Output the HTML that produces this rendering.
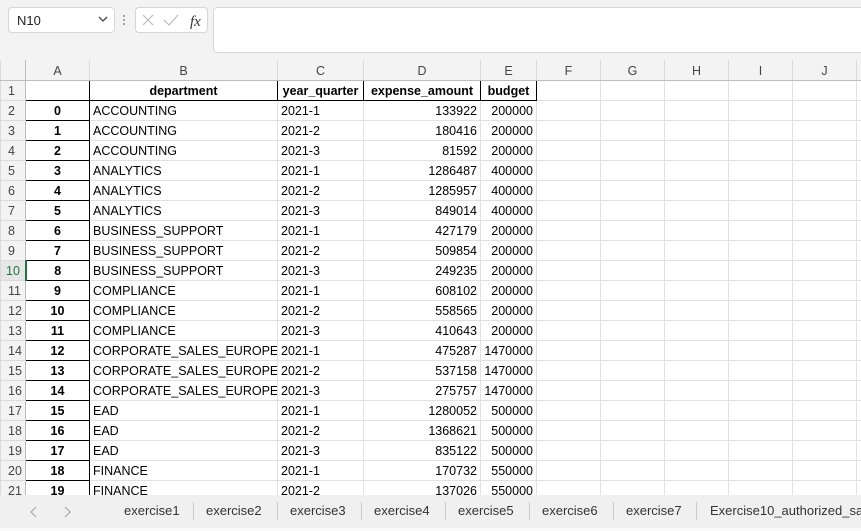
<!DOCTYPE html>
<html><head><style>
*{margin:0;padding:0;box-sizing:border-box}
body{width:861px;height:531px;overflow:hidden;background:#f3f3f3;font-family:"Liberation Sans",Arial,sans-serif;position:relative}
.nb{position:absolute;left:8px;top:7px;width:107px;height:26px;background:#fff;border:1px solid #d6d6d6;border-radius:4px;font-size:13px;color:#222;padding:5px 0 0 8px}
.fx{position:absolute;left:135px;top:7px;width:73px;height:26px;background:#fff;border:1px solid #d6d6d6;border-radius:4px}
.fb{position:absolute;left:213px;top:7px;width:660px;height:46px;background:#fff;border:1px solid #d6d6d6;border-radius:4px}
.grid{position:absolute;left:0;top:60px;width:861px;height:435px;overflow:hidden;background:#fff}
table{border-collapse:collapse;table-layout:fixed;font-size:12.5px;color:#000;width:897px}
td{height:20px;border:1px solid #e1e1e1;padding:0 3px;white-space:nowrap;overflow:hidden;line-height:18px}
tr.h td{background:#f3f3f3;color:#444;text-align:center;border-color:#f3f3f3 #dadada #bdbdbd #dadada}
td.rh{background:#f3f3f3;color:#444;text-align:left;padding-left:7px;border-color:#dadada;border-right:1px solid #bdbdbd}
td.a{font-weight:bold;text-align:center;border:1px solid #000}
td.hd{font-weight:bold;text-align:center;border:1px solid #000}
.r{text-align:right}
.tabs{position:absolute;left:0;top:495px;width:861px;height:33px;background:#f0f0f0;font-size:13px;color:#333}
.tabs span{position:absolute;top:8px}
.sep{position:absolute;top:7px;width:1px;height:18px;background:#ccc}
.dot{position:absolute;left:123px;width:2px;height:2px;background:#888;border-radius:1px}
</style></head><body>
<div class="nb">N10<svg style="position:absolute;right:6px;top:8px" width="10" height="7"><path d="M1 1 L5 5 L9 1" stroke="#444" fill="none" stroke-width="1.3"/></svg></div>
<div class="dot" style="top:15px"></div><div class="dot" style="top:19px"></div><div class="dot" style="top:23px"></div>
<div class="fx"><svg width="73" height="26"><path d="M7 7 L17 17 M17 7 L7 17" stroke="#bbb" stroke-width="1.2"/><path d="M28 12 L33 17 L42 7" stroke="#bbb" stroke-width="1.2" fill="none"/><text x="54" y="18" font-family="Liberation Serif,serif" font-style="italic" font-size="15" fill="#333">fx</text></svg></div>
<div class="fb"></div>
<div class="grid">
<table>
<colgroup><col style="width:25px"><col style="width:64px"><col style="width:188px"><col style="width:86px"><col style="width:117px"><col style="width:56px"><col style="width:64px"><col style="width:64px"><col style="width:64px"><col style="width:64px"><col style="width:64px"><col style="width:41px"></colgroup>
<tr class="h"><td style="border-right:1px solid #bdbdbd"></td><td>A</td><td>B</td><td>C</td><td>D</td><td>E</td><td>F</td><td>G</td><td>H</td><td>I</td><td>J</td><td></td></tr>
<tr><td class="rh">1</td><td class="a"></td><td class="hd">department</td><td class="hd">year_quarter</td><td class="hd">expense_amount</td><td class="hd">budget</td><td></td><td></td><td></td><td></td><td></td><td></td></tr>
<tr><td class="rh">2</td><td class="a">0</td><td>ACCOUNTING</td><td>2021-1</td><td class="r">133922</td><td class="r">200000</td><td></td><td></td><td></td><td></td><td></td><td></td></tr>
<tr><td class="rh">3</td><td class="a">1</td><td>ACCOUNTING</td><td>2021-2</td><td class="r">180416</td><td class="r">200000</td><td></td><td></td><td></td><td></td><td></td><td></td></tr>
<tr><td class="rh">4</td><td class="a">2</td><td>ACCOUNTING</td><td>2021-3</td><td class="r">81592</td><td class="r">200000</td><td></td><td></td><td></td><td></td><td></td><td></td></tr>
<tr><td class="rh">5</td><td class="a">3</td><td>ANALYTICS</td><td>2021-1</td><td class="r">1286487</td><td class="r">400000</td><td></td><td></td><td></td><td></td><td></td><td></td></tr>
<tr><td class="rh">6</td><td class="a">4</td><td>ANALYTICS</td><td>2021-2</td><td class="r">1285957</td><td class="r">400000</td><td></td><td></td><td></td><td></td><td></td><td></td></tr>
<tr><td class="rh">7</td><td class="a">5</td><td>ANALYTICS</td><td>2021-3</td><td class="r">849014</td><td class="r">400000</td><td></td><td></td><td></td><td></td><td></td><td></td></tr>
<tr><td class="rh">8</td><td class="a">6</td><td>BUSINESS_SUPPORT</td><td>2021-1</td><td class="r">427179</td><td class="r">200000</td><td></td><td></td><td></td><td></td><td></td><td></td></tr>
<tr><td class="rh">9</td><td class="a">7</td><td>BUSINESS_SUPPORT</td><td>2021-2</td><td class="r">509854</td><td class="r">200000</td><td></td><td></td><td></td><td></td><td></td><td></td></tr>
<tr><td class="rh" style="color:#217346;border-right:2px solid #217346;background:#e6e6e6;padding-left:5px">10</td><td class="a">8</td><td>BUSINESS_SUPPORT</td><td>2021-3</td><td class="r">249235</td><td class="r">200000</td><td></td><td></td><td></td><td></td><td></td><td></td></tr>
<tr><td class="rh">11</td><td class="a">9</td><td>COMPLIANCE</td><td>2021-1</td><td class="r">608102</td><td class="r">200000</td><td></td><td></td><td></td><td></td><td></td><td></td></tr>
<tr><td class="rh">12</td><td class="a">10</td><td>COMPLIANCE</td><td>2021-2</td><td class="r">558565</td><td class="r">200000</td><td></td><td></td><td></td><td></td><td></td><td></td></tr>
<tr><td class="rh">13</td><td class="a">11</td><td>COMPLIANCE</td><td>2021-3</td><td class="r">410643</td><td class="r">200000</td><td></td><td></td><td></td><td></td><td></td><td></td></tr>
<tr><td class="rh">14</td><td class="a">12</td><td>CORPORATE_SALES_EUROPE</td><td>2021-1</td><td class="r">475287</td><td class="r">1470000</td><td></td><td></td><td></td><td></td><td></td><td></td></tr>
<tr><td class="rh">15</td><td class="a">13</td><td>CORPORATE_SALES_EUROPE</td><td>2021-2</td><td class="r">537158</td><td class="r">1470000</td><td></td><td></td><td></td><td></td><td></td><td></td></tr>
<tr><td class="rh">16</td><td class="a">14</td><td>CORPORATE_SALES_EUROPE</td><td>2021-3</td><td class="r">275757</td><td class="r">1470000</td><td></td><td></td><td></td><td></td><td></td><td></td></tr>
<tr><td class="rh">17</td><td class="a">15</td><td>EAD</td><td>2021-1</td><td class="r">1280052</td><td class="r">500000</td><td></td><td></td><td></td><td></td><td></td><td></td></tr>
<tr><td class="rh">18</td><td class="a">16</td><td>EAD</td><td>2021-2</td><td class="r">1368621</td><td class="r">500000</td><td></td><td></td><td></td><td></td><td></td><td></td></tr>
<tr><td class="rh">19</td><td class="a">17</td><td>EAD</td><td>2021-3</td><td class="r">835122</td><td class="r">500000</td><td></td><td></td><td></td><td></td><td></td><td></td></tr>
<tr><td class="rh">20</td><td class="a">18</td><td>FINANCE</td><td>2021-1</td><td class="r">170732</td><td class="r">550000</td><td></td><td></td><td></td><td></td><td></td><td></td></tr>
<tr><td class="rh">21</td><td class="a">19</td><td>FINANCE</td><td>2021-2</td><td class="r">137026</td><td class="r">550000</td><td></td><td></td><td></td><td></td><td></td><td></td></tr>
</table>
</div>
<div class="tabs">
<svg style="position:absolute;left:28px;top:10px" width="50" height="14"><path d="M8 2 L3 7 L8 12" stroke="#aaa" fill="none" stroke-width="1.2"/><path d="M37 2 L42 7 L37 12" stroke="#aaa" fill="none" stroke-width="1.2"/></svg>
<span style="left:124px">exercise1</span><div class="sep" style="left:193px"></div>
<span style="left:206px">exercise2</span><div class="sep" style="left:277px"></div>
<span style="left:290px">exercise3</span><div class="sep" style="left:361px"></div>
<span style="left:374px">exercise4</span><div class="sep" style="left:445px"></div>
<span style="left:458px">exercise5</span><div class="sep" style="left:529px"></div>
<span style="left:542px">exercise6</span><div class="sep" style="left:613px"></div>
<span style="left:626px">exercise7</span><div class="sep" style="left:696px"></div>
<span style="left:710px">Exercise10_authorized_sales</span>
</div>
<div style="position:absolute;left:0;top:528px;width:861px;height:3px;background:#fafafa"></div>
</body></html>
